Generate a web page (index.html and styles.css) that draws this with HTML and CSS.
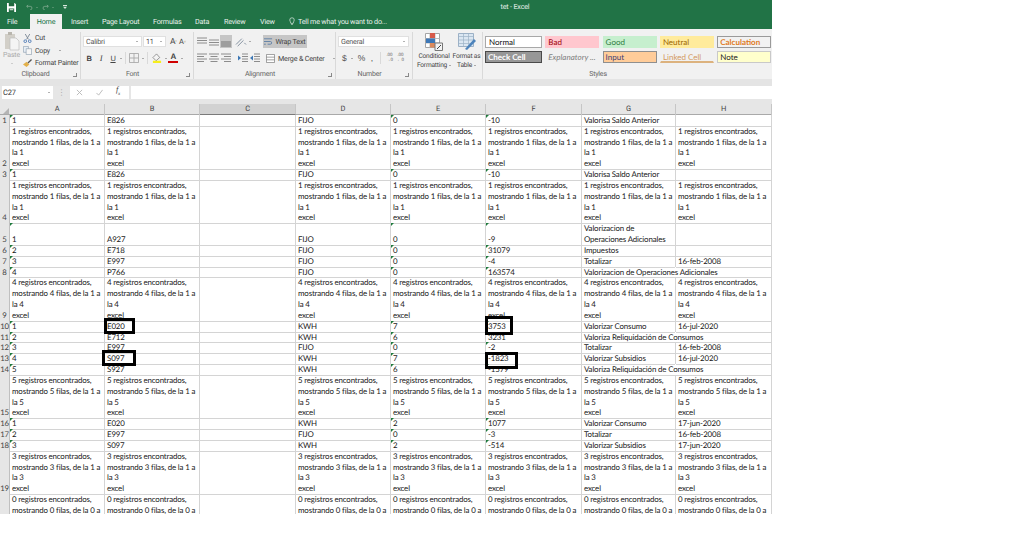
FILE: index.html
```html
<!DOCTYPE html>
<html lang="en">
<head>
<meta charset="utf-8">
<title>tet - Excel</title>
<link rel="stylesheet" href="styles.css">
</head>
<body>
<div class="app">
  <header class="title">
    <div class="qat">
      <svg class="q-save" viewBox="0 0 10 10"><path d="M0 0h8.500L10 1.500V10H0z" fill="#fff"/><path d="M2 0h6v3.500H2zM2 6h6v4H2z" fill="#20693f"/><path d="M3 7h4v1H3z" fill="#fff"/></svg>
      <svg class="q-undo" viewBox="0 0 10 8"><path d="M3 1 1 3l2 2M1 3h5a2.500 2.500 0 0 1 0 5" fill="none" stroke="#7fa98e" stroke-width="1.200"/></svg>
      <span class="q-dot"></span>
      <svg class="q-redo" viewBox="0 0 10 8"><path d="M7 1l2 2-2 2M9 3H4a2.500 2.500 0 0 0 0 5" fill="none" stroke="#7fa98e" stroke-width="1.200"/></svg>
      <span class="q-dot"></span>
      <svg class="q-more" viewBox="0 0 5 6"><path d="M0 0h5v1H0zM0 2l2.500 3L5 2z" fill="#d5e5da"/></svg>
    </div>
    <div class="doc">tet - Excel</div>
  </header>
  <nav class="tabs">
    <span class="tab t-file">File</span>
    <span class="tab t-home">Home</span>
    <span class="tab t-ins">Insert</span>
    <span class="tab t-page">Page Layout</span>
    <span class="tab t-form">Formulas</span>
    <span class="tab t-data">Data</span>
    <span class="tab t-rev">Review</span>
    <span class="tab t-view">View</span>
    <span class="tell">
      <svg class="bulb" viewBox="0 0 8 11"><path d="M2.500 8C2.500 6 1 5.500 1 3.500a3 3 0 0 1 6 0C7 5.500 5.500 6 5.500 8zM3 9.500h2" fill="none" stroke="#fff" stroke-width=".8"/></svg>
      Tell me what you want to do...
    </span>
  </nav>

  <section class="ribbon">
    <div class="grp g-clip">
      <div class="grp-body clip">
        <div class="paste">
          <svg class="paste-ic" viewBox="0 0 16 19"><path d="M1 2h10v15H1z" fill="#d2cfc8"/><path d="M4 0h4v3H4z" fill="#b9b6ae"/><path d="M6 6h6l3 3v9H6z" fill="#f4f4f4" stroke="#bdbdbd" stroke-width=".7"/></svg>
          <span class="paste-t">Paste</span>
          <span class="arrow paste-a"></span>
        </div>
        <div class="clip-list">
          <div class="clip-i"><svg class="i10" viewBox="0 0 10 10"><path d="M2.500 0 6 6M7.500 0 4 6" stroke="#7b8794" fill="none"/><circle cx="2.500" cy="8" r="1.500" fill="none" stroke="#4a78b5"/><circle cx="7.500" cy="8" r="1.500" fill="none" stroke="#4a78b5"/></svg>Cut</div>
          <div class="clip-i"><svg class="i10" viewBox="0 0 10 10"><path d="M.5.500h5.500v6.500H.5z" fill="#e7eef6" stroke="#8b9cad" stroke-width=".7"/><path d="M3.500 3h6v6.500h-6z" fill="#f6f6f6" stroke="#8b9cad" stroke-width=".7"/></svg>Copy<span class="arrow copy-a"></span></div>
          <div class="clip-i"><svg class="i10" viewBox="0 0 10 10"><path d="M0 6l4-3 3 3-3 3z" fill="#e2b04a"/><path d="M5 4l4-4 1 1-4 4z" fill="#555"/></svg>Format Painter</div>
        </div>
      </div>
      <div class="grp-label">Clipboard<span class="launch"></span></div>
    </div>

    <div class="grp g-font">
      <div class="grp-body col">
        <div class="rw">
          <div class="combo c-name"><span>Calibri</span><span class="arrow"></span></div>
          <div class="combo c-size"><span>11</span><span class="arrow"></span></div>
          <span class="grow">A<sup>^</sup></span>
          <span class="grow small">A<sup>˅</sup></span>
        </div>
        <div class="rw r-fmt">
          <b class="f f-b">B</b><i class="f f-i">I</i><span class="f f-u">U</span><span class="arrow u-a"></span>
          <span class="vsep"></span>
          <svg class="i11" viewBox="0 0 11 11"><path d="M.5.500h10v10H.5zM5.500.5v10M.5 5.500h10" fill="none" stroke="#a9a9a9"/></svg><span class="arrow b-a"></span>
          <span class="vsep v2"></span>
          <svg class="i11" viewBox="0 0 11 11"><path d="M5 1 1 5l3.500 3.500L8.500 5z" fill="#f4f4f4" stroke="#666" stroke-width=".7"/><path d="M1 8.500h9V11H1z" fill="#f6ee1c"/></svg><span class="arrow b-a b-f"></span>
          <span class="fcolor">A</span><span class="arrow b-a"></span>
        </div>
      </div>
      <div class="grp-label">Font<span class="launch"></span></div>
    </div>

    <div class="grp g-align">
      <div class="grp-body col">
        <div class="rw">
          <svg class="i12" viewBox="0 0 12 12"><path d="M1 2h10M1 4.500h10M1 7h10" stroke="#8c8c8c"/></svg>
          <svg class="i12" viewBox="0 0 12 12"><path d="M1 4h10M1 6.500h10M1 9h10" stroke="#8c8c8c"/></svg>
          <span class="hl"><svg class="i12" viewBox="0 0 12 12"><path d="M1 6h10M1 8h10M1 10h10" stroke="#777"/></svg></span>
          <svg class="orient" viewBox="0 0 14 12"><path d="M1 9 8 2M3 11l7-7" stroke="#6d7d8f"/><path d="M11 7l2 2" stroke="#6d7d8f"/></svg><span class="arrow o-a"></span>
          <span class="wrap"><svg class="i10" viewBox="0 0 10 10"><path d="M0 2h9M0 5h7a1.500 1.500 0 0 1 0 3H4M0 8h2" fill="none" stroke="#5d7fa5"/></svg>Wrap Text</span>
        </div>
        <div class="rw r-al">
          <svg class="i12" viewBox="0 0 12 12"><path d="M1 2h10M1 4.500h7M1 7h10M1 9.500h7" stroke="#8c8c8c"/></svg>
          <svg class="i12" viewBox="0 0 12 12"><path d="M1 2h10M2.500 4.500h7M1 7h10M2.500 9.500h7" stroke="#8c8c8c"/></svg>
          <svg class="i12" viewBox="0 0 12 12"><path d="M1 2h10M4 4.500h7M1 7h10M4 9.500h7" stroke="#8c8c8c"/></svg>
          <svg class="i12 i-ind" viewBox="0 0 12 12"><path d="M5 2h6M5 4.500h6M5 7h6M5 9.500h6" stroke="#8c8c8c"/><path d="M4 6 1 3.500v5z" fill="#3e78b5"/></svg>
          <svg class="i12" viewBox="0 0 12 12"><path d="M5 2h6M5 4.500h6M5 7h6M5 9.500h6" stroke="#8c8c8c"/><path d="M1 6l3-2.500v5z" fill="#3e78b5"/></svg>
          <span class="merge"><svg class="i10" viewBox="0 0 10 10"><path d="M.5.500h9v9h-9zM.5 3.500h9M.5 6.500h9" fill="#fff" stroke="#7c7c7c" stroke-width=".8"/></svg>Merge &amp; Center<span class="arrow m-a"></span></span>
        </div>
      </div>
      <div class="grp-label">Alignment<span class="launch"></span></div>
    </div>

    <div class="grp g-num">
      <div class="grp-body col">
        <div class="rw"><div class="combo c-num"><span>General</span><span class="arrow"></span></div></div>
        <div class="rw r-num">
          <span class="n n-d">$</span><span class="arrow n-a"></span>
          <span class="n n-p">%</span><span class="n n-c">,</span>
          <span class="vsep n-s"></span>
          <span class="dec">.00<br>→0</span><span class="dec">.00<br>←0</span>
        </div>
      </div>
      <div class="grp-label">Number<span class="launch"></span></div>
    </div>

    <div class="grp g-tbl">
      <div class="grp-body big-row">
        <div class="big">
          <svg class="big-ic" viewBox="0 0 18 18"><path d="M.5.500h14v14H.5z" fill="#fff" stroke="#a5a5a5"/><path d="M.5 5.500h14M.5 10h14M5 .5v14M10 .5v14" stroke="#bbb"/><path d="M5 0h5v5H5z" fill="#d75a4a"/><path d="M1 5.500h4V10H1zM5 5.500h5V10H5z" fill="#3d78b8"/><path d="M5 10h5v4.500H5z" fill="#dc8a5c"/><path d="M10 10h7.500v7.500H10z" fill="#f3f3f3" stroke="#777"/><path d="M12 16l4-4" stroke="#444"/></svg>
          <span>Conditional<br>Formatting<span class="arrow in"></span></span>
        </div>
        <div class="big">
          <svg class="big-ic" viewBox="0 0 18 18"><path d="M.5.500h15v13H.5z" fill="#dbe7f2" stroke="#9cb1c6"/><path d="M.5 3.500h15M.5 7h15M.5 10.500h15M5.500.5v13M10.500.5v13" stroke="#9cb1c6" stroke-width=".7"/><path d="M7 16l9-10 2 2-9 9z" fill="#4d83bb"/></svg>
          <span>Format as<br>Table<span class="arrow in"></span></span>
        </div>
      </div>
      <div class="grp-label">&nbsp;</div>
    </div>

    <div class="grp g-sty">
      <div class="grp-body sty">
        <span class="s s-norm">Normal</span>
        <span class="s s-bad">Bad</span>
        <span class="s s-good">Good</span>
        <span class="s s-neu">Neutral</span>
        <span class="s s-calc">Calculation</span>
        <span class="s s-chk">Check Cell</span>
        <span class="s s-exp">Explanatory ...</span>
        <span class="s s-inp">Input</span>
        <span class="s s-lnk">Linked Cell</span>
        <span class="s s-note">Note</span>
      </div>
      <div class="grp-label sty-label">Styles</div>
    </div>
  </section>

  <div class="band"></div>

  <div class="fbar">
    <div class="namebox"><span>C27</span><span class="arrow"></span></div>
    <span class="dots">⋮</span>
    <div class="fbtns">
      <svg class="fb" viewBox="0 0 8 8"><path d="M1 1l6 6M7 1 1 7" stroke="#b5b5b5"/></svg>
      <svg class="fb" viewBox="0 0 8 8"><path d="M.5 4.500 3 7l4.500-6" fill="none" stroke="#b5b5b5"/></svg>
      <i class="fx">f<sub>x</sub></i>
    </div>
    <div class="finput"></div>
  </div>

  <div class="sheet">
    <div class="rowg heads">
      <div class="corner"><span></span></div>
      <div class="ch">A</div><div class="ch">B</div><div class="ch sel">C</div><div class="ch">D</div><div class="ch">E</div><div class="ch">F</div><div class="ch">G</div><div class="ch">H</div>
    </div>

    <div class="rowg l1"><div class="rh">1</div><div class="c g">1</div><div class="c">E826</div><div class="c"></div><div class="c">FIJO</div><div class="c g">0</div><div class="c g">-10</div><div class="c">Valorisa Saldo Anterior</div><div class="c"></div></div>

    <div class="rowg l4"><div class="rh">2</div><div class="c">1 registros encontrados,<br>mostrando 1 filas, de la 1 a<br>la 1<br>excel</div><div class="c">1 registros encontrados,<br>mostrando 1 filas, de la 1 a<br>la 1<br>excel</div><div class="c"></div><div class="c">1 registros encontrados,<br>mostrando 1 filas, de la 1 a<br>la 1<br>excel</div><div class="c">1 registros encontrados,<br>mostrando 1 filas, de la 1 a<br>la 1<br>excel</div><div class="c">1 registros encontrados,<br>mostrando 1 filas, de la 1 a<br>la 1<br>excel</div><div class="c">1 registros encontrados,<br>mostrando 1 filas, de la 1 a<br>la 1<br>excel</div><div class="c">1 registros encontrados,<br>mostrando 1 filas, de la 1 a<br>la 1<br>excel</div></div>

    <div class="rowg l1"><div class="rh">3</div><div class="c g">1</div><div class="c">E826</div><div class="c"></div><div class="c">FIJO</div><div class="c g">0</div><div class="c g">-10</div><div class="c">Valorisa Saldo Anterior</div><div class="c"></div></div>

    <div class="rowg l4"><div class="rh">4</div><div class="c">1 registros encontrados,<br>mostrando 1 filas, de la 1 a<br>la 1<br>excel</div><div class="c">1 registros encontrados,<br>mostrando 1 filas, de la 1 a<br>la 1<br>excel</div><div class="c"></div><div class="c">1 registros encontrados,<br>mostrando 1 filas, de la 1 a<br>la 1<br>excel</div><div class="c">1 registros encontrados,<br>mostrando 1 filas, de la 1 a<br>la 1<br>excel</div><div class="c">1 registros encontrados,<br>mostrando 1 filas, de la 1 a<br>la 1<br>excel</div><div class="c">1 registros encontrados,<br>mostrando 1 filas, de la 1 a<br>la 1<br>excel</div><div class="c">1 registros encontrados,<br>mostrando 1 filas, de la 1 a<br>la 1<br>excel</div></div>

    <div class="rowg l2"><div class="rh">5</div><div class="c g">1</div><div class="c">A927</div><div class="c"></div><div class="c">FIJO</div><div class="c g">0</div><div class="c g">-9</div><div class="c">Valorizacion de<br>Operaciones Adicionales</div><div class="c"></div></div>
    <div class="rowg l1"><div class="rh">6</div><div class="c g">2</div><div class="c">E718</div><div class="c"></div><div class="c">FIJO</div><div class="c g">0</div><div class="c g">31079</div><div class="c">Impuestos</div><div class="c"></div></div>
    <div class="rowg l1"><div class="rh">7</div><div class="c g">3</div><div class="c">E997</div><div class="c"></div><div class="c">FIJO</div><div class="c g">0</div><div class="c g">-4</div><div class="c">Totalizar</div><div class="c">16-feb-2008</div></div>
    <div class="rowg l1"><div class="rh">8</div><div class="c g">4</div><div class="c">P766</div><div class="c"></div><div class="c">FIJO</div><div class="c g">0</div><div class="c g">163574</div><div class="c over">Valorizacion de Operaciones Adicionales</div><div class="c"></div></div>

    <div class="rowg l4"><div class="rh">9</div><div class="c">4 registros encontrados,<br>mostrando 4 filas, de la 1 a<br>la 4<br>excel</div><div class="c">4 registros encontrados,<br>mostrando 4 filas, de la 1 a<br>la 4<br>excel</div><div class="c"></div><div class="c">4 registros encontrados,<br>mostrando 4 filas, de la 1 a<br>la 4<br>excel</div><div class="c">4 registros encontrados,<br>mostrando 4 filas, de la 1 a<br>la 4<br>excel</div><div class="c">4 registros encontrados,<br>mostrando 4 filas, de la 1 a<br>la 4<br>excel</div><div class="c">4 registros encontrados,<br>mostrando 4 filas, de la 1 a<br>la 4<br>excel</div><div class="c">4 registros encontrados,<br>mostrando 4 filas, de la 1 a<br>la 4<br>excel</div></div>

    <div class="rowg l1"><div class="rh">10</div><div class="c g">1</div><div class="c">E020</div><div class="c"></div><div class="c">KWH</div><div class="c g">7</div><div class="c g">3753</div><div class="c">Valorizar Consumo</div><div class="c">16-jul-2020</div></div>
    <div class="rowg l1"><div class="rh">11</div><div class="c g">2</div><div class="c">E712</div><div class="c"></div><div class="c">KWH</div><div class="c g">6</div><div class="c g">3231</div><div class="c over">Valoriza Reliquidación de Consumos</div><div class="c"></div></div>
    <div class="rowg l1"><div class="rh">12</div><div class="c g">3</div><div class="c">E997</div><div class="c"></div><div class="c">FIJO</div><div class="c g">0</div><div class="c g">-2</div><div class="c">Totalizar</div><div class="c">16-feb-2008</div></div>
    <div class="rowg l1"><div class="rh">13</div><div class="c g">4</div><div class="c">S097</div><div class="c"></div><div class="c">KWH</div><div class="c g">7</div><div class="c g">-1823</div><div class="c">Valorizar Subsidios</div><div class="c">16-jul-2020</div></div>
    <div class="rowg l1"><div class="rh">14</div><div class="c g">5</div><div class="c">S927</div><div class="c"></div><div class="c">KWH</div><div class="c g">6</div><div class="c g">-1579</div><div class="c over">Valoriza Reliquidación de Consumos</div><div class="c"></div></div>

    <div class="rowg l4"><div class="rh">15</div><div class="c">5 registros encontrados,<br>mostrando 5 filas, de la 1 a<br>la 5<br>excel</div><div class="c">5 registros encontrados,<br>mostrando 5 filas, de la 1 a<br>la 5<br>excel</div><div class="c"></div><div class="c">5 registros encontrados,<br>mostrando 5 filas, de la 1 a<br>la 5<br>excel</div><div class="c">5 registros encontrados,<br>mostrando 5 filas, de la 1 a<br>la 5<br>excel</div><div class="c">5 registros encontrados,<br>mostrando 5 filas, de la 1 a<br>la 5<br>excel</div><div class="c">5 registros encontrados,<br>mostrando 5 filas, de la 1 a<br>la 5<br>excel</div><div class="c">5 registros encontrados,<br>mostrando 5 filas, de la 1 a<br>la 5<br>excel</div></div>

    <div class="rowg l1"><div class="rh">16</div><div class="c g">1</div><div class="c">E020</div><div class="c"></div><div class="c">KWH</div><div class="c g">2</div><div class="c g">1077</div><div class="c">Valorizar Consumo</div><div class="c">17-jun-2020</div></div>
    <div class="rowg l1"><div class="rh">17</div><div class="c g">2</div><div class="c">E997</div><div class="c"></div><div class="c">FIJO</div><div class="c g">0</div><div class="c g">-3</div><div class="c">Totalizar</div><div class="c">16-feb-2008</div></div>
    <div class="rowg l1"><div class="rh">18</div><div class="c g">3</div><div class="c">S097</div><div class="c"></div><div class="c">KWH</div><div class="c g">2</div><div class="c g">-514</div><div class="c">Valorizar Subsidios</div><div class="c">17-jun-2020</div></div>

    <div class="rowg l4"><div class="rh">19</div><div class="c">3 registros encontrados,<br>mostrando 3 filas, de la 1 a<br>la 3<br>excel</div><div class="c">3 registros encontrados,<br>mostrando 3 filas, de la 1 a<br>la 3<br>excel</div><div class="c"></div><div class="c">3 registros encontrados,<br>mostrando 3 filas, de la 1 a<br>la 3<br>excel</div><div class="c">3 registros encontrados,<br>mostrando 3 filas, de la 1 a<br>la 3<br>excel</div><div class="c">3 registros encontrados,<br>mostrando 3 filas, de la 1 a<br>la 3<br>excel</div><div class="c">3 registros encontrados,<br>mostrando 3 filas, de la 1 a<br>la 3<br>excel</div><div class="c">3 registros encontrados,<br>mostrando 3 filas, de la 1 a<br>la 3<br>excel</div></div>

    <div class="rowg l4"><div class="rh">20</div><div class="c">0 registros encontrados,<br>mostrando 0 filas, de la 0 a<br>la 0<br>excel</div><div class="c">0 registros encontrados,<br>mostrando 0 filas, de la 0 a<br>la 0<br>excel</div><div class="c"></div><div class="c">0 registros encontrados,<br>mostrando 0 filas, de la 0 a<br>la 0<br>excel</div><div class="c">0 registros encontrados,<br>mostrando 0 filas, de la 0 a<br>la 0<br>excel</div><div class="c">0 registros encontrados,<br>mostrando 0 filas, de la 0 a<br>la 0<br>excel</div><div class="c">0 registros encontrados,<br>mostrando 0 filas, de la 0 a<br>la 0<br>excel</div><div class="c">0 registros encontrados,<br>mostrando 0 filas, de la 0 a<br>la 0<br>excel</div></div>

    <span class="mark m1"></span>
    <span class="mark m2"></span>
    <span class="mark m3"></span>
    <span class="mark m4"></span>
  </div>
</div>
</body>
</html>
```

FILE: styles.css
```css
* { box-sizing: border-box; }
html, body { margin: 0; padding: 0; background: #fff; }
body { width: 1024px; height: 534px; overflow: hidden; text-rendering: geometricPrecision; }
.app {
  width: 772px; height: 514px; overflow: hidden;
  display: flex; flex-direction: column;
  font-family: Roboto, "Liberation Sans", sans-serif;
  font-size: 7.200px; letter-spacing: -.2px; color: #444; background: #e6e6e6;
}

/* title bar */
.title { height: 14px; flex: none; background: #217346; color: #e6f0ea; position: relative; display: flex; align-items: center; }
.qat { display: flex; align-items: center; padding-left: 7px; }
.q-save { width: 9px; height: 9px; margin-right: 10px; }
.q-undo, .q-redo { width: 7px; height: 6px; }
.q-dot { width: 0; height: 0; margin: 0 4px 0 3px; border: 1.500px solid transparent; border-top-color: #7fa98e; border-bottom: 0; }
.q-more { width: 4px; height: 5px; margin-left: 5px; }
.doc { position: absolute; left: 0; width: 1030px; top: 2px; text-align: center; line-height: 10px; }

/* tabs */
.tabs { height: 15px; flex: none; background: #217346; display: flex; align-items: stretch; color: #eaf2ed; line-height: 15px; }
.tab { display: block; }
.t-file { margin-left: 7px; width: 23px; }
.t-home { width: 32px; background: #f1f1f1; color: #217346; text-align: center; }
.t-ins { margin-left: 9px; width: 31px; }
.t-page { width: 51px; }
.t-form { width: 42px; }
.t-data { width: 29px; }
.t-rev { width: 36px; }
.t-view { width: 29px; }
.tell { display: flex; align-items: center; gap: 3px; }
.bulb { width: 6px; height: 9px; }

/* ribbon */
.ribbon { height: 50px; flex: none; background: #f1f1f1; display: flex; padding-top: 3px; }
.grp { display: flex; flex-direction: column; border-right: 1px solid #d9d9d9; flex: none; height: 47px; }
.g-sty { border-right: 0; flex: 1; }
.grp-body { height: 38px; flex: none; }
.grp-label { height: 9px; line-height: 9px; padding-right: 9px; text-align: center; font-size: 7px; color: #666; position: relative; }
.sty-label { padding-right: 59px; }
.launch { position: absolute; right: 3px; top: 3px; width: 4px; height: 4px; border-right: 1px solid #888; border-bottom: 1px solid #888; }
.g-clip { width: 81px; }
.g-font { width: 113px; }
.g-align { width: 142px; }
.g-num { width: 77px; }
.g-tbl { width: 70px; }
.col { display: flex; flex-direction: column; }
.rw { display: flex; align-items: center; height: 15px; margin-top: 2px; }
.rw > * { flex: none; }
.r-fmt { margin-top: 1.500px; padding-left: 2px; }
.arrow { display: inline-block; width: 0; height: 0; border: 1.800px solid transparent; border-top-color: #666; border-bottom: 0; flex: none; }
.arrow.in { margin-left: 2px; vertical-align: middle; }

.clip { display: flex; padding-left: 3px; }
.paste { width: 17px; display: flex; flex-direction: column; align-items: center; color: #aaa; }
.paste-ic { width: 16px; height: 19px; flex: none; }
.paste-t { font-size: 7px; line-height: 9px; margin-top: 0; }
.paste-a { margin-top: 3px; border-top-color: #aaa; }
.clip-list { margin-left: 3px; margin-top: 0; display: flex; flex-direction: column; }
.clip-i { height: 12.500px; display: flex; align-items: center; gap: 3px; white-space: nowrap; font-size: 7px; color: #444; }
.copy-a { margin-left: 6px; }
.i10 { width: 9px; height: 9px; flex: none; }
.i11 { width: 10px; height: 10px; flex: none; }
.i12 { width: 12px; height: 12px; flex: none; }

.combo { height: 11px; background: #fff; border: 1px solid #e0e0e0; display: flex; align-items: center; justify-content: space-between; padding: 0 3px 0 2px; color: #555; }
.g-font .rw:first-child { padding-left: 2px; }
.c-name { width: 59px; }
.c-size { width: 23px; margin-left: 1px; }
.grow { font-size: 8.500px; margin-left: 4px; width: 8px; color: #444; line-height: 10px; white-space: nowrap; }
.grow.small { font-size: 7.500px; margin-left: 1px; }
.grow sup { font-size: 4px; color: #b08a3a; vertical-align: top; }
.f { font-family: "Liberation Serif", serif; font-size: 8.500px; width: 12px; text-align: center; color: #444; }
.f-b { font-family: "Liberation Sans", sans-serif; font-size: 7.500px; }
.f-u { text-decoration: underline; font-family: "Liberation Sans", sans-serif; font-size: 7.500px; }
.u-a { margin-left: 1px; }
.vsep { width: 1px; height: 12px; background: #d9d9d9; margin: 0 3px 0 3.400px; }
.v2 { margin: 0 3.400px 0 0; }
.b-a { margin: 0 3px; }
.b-f { margin-right: 1.400px; }
.fcolor { width: 10px; text-align: center; font-family: "Liberation Sans", sans-serif; font-weight: bold; font-size: 8px; line-height: 8px; color: #444; border-bottom: 2px solid #d00000; }

.g-align .rw { padding-left: 2px; }
.hl { width: 12px; height: 13px; background: #c6c6c6; display: flex; align-items: center; }
.orient { width: 12px; height: 10px; margin-left: 3px; }
.o-a { margin-left: 2px; }
.wrap { width: 44px; height: 13px; margin-left: 12.400px; background: #c6c6c6; display: flex; align-items: center; gap: 2px; padding-left: 1px; white-space: nowrap; }
.r-al { margin-top: 1.500px; }
.i-ind { margin-left: 5px; }
.merge { margin-left: 5px; display: flex; align-items: center; gap: 3px; white-space: nowrap; }
.m-a { margin-left: 5px; }

.c-num { width: 71px; margin-left: 2px; }
.g-num .r-num { margin-top: 1.500px; padding-left: 6px; }
.n { font-family: "Liberation Sans", sans-serif; color: #555; text-align: center; font-size: 8.500px; }
.n-a { margin: 0 3.400px 0 4px; }
.n-p { width: 11px; }
.n-c { width: 4px; margin-left: 3px; }
.n-s { margin: 0 3px 0 6px; }
.dec { font-size: 4.500px; line-height: 5px; width: 11px; color: #666; text-align: center; }

.big-row { display: flex; padding-left: 4px; }
.big { width: 34px; display: flex; flex-direction: column; align-items: center; text-align: center; font-size: 6.600px; line-height: 9px; white-space: nowrap; color: #444; }
.big + .big { margin-left: 0; }
.big-ic { width: 18px; height: 18px; flex: none; margin: 1px 0 1px; }

.sty { display: grid; grid-template-columns: 57px repeat(4, 54px); column-gap: 3.300px; row-gap: 3px; padding: 4px 0 0 2px; grid-auto-rows: 12px; letter-spacing: 0; }
.s { font-family: Lato, sans-serif; font-size: 8px; line-height: 10px; padding-left: 2px; border: 1px solid transparent; white-space: nowrap; overflow: hidden; }
.s-norm { background: #fff; border-color: #a8a8a8; color: #111; padding-left: 3px; }
.s-bad { background: #ffc7ce; color: #9c0006; }
.s-good { background: #c6efce; color: #2f7d3f; }
.s-neu { background: #ffeb9c; color: #9c6500; }
.s-calc { background: #f2f2f2; color: #e07a1c; border-color: #9a9a9a; font-weight: bold; }
.s-chk { background: #979797; color: #fff; border-color: #4a4a4a; font-weight: bold; }
.s-exp { color: #7f7f7f; font-style: italic; }
.s-inp { background: #ffcc99; color: #3f3f76; border-color: #8f8f8f; }
.s-lnk { color: #d39a62; border-bottom: 2px solid #dcb27e; }
.s-note { background: #ffffcc; color: #222; border-color: #c9c9c9; }

.band { height: 7px; flex: none; background: #e4e4e4; }

/* formula bar */
.fbar { height: 18px; flex: none; background: #e6e6e6; display: flex; padding-bottom: 5px; }
.namebox { width: 51px; margin-left: 2px; background: #fff; display: flex; align-items: center; justify-content: space-between; padding: 0 3px 0 1px; font-size: 7.500px; color: #333; }
.dots { width: 17px; text-align: center; color: #aaa; font-size: 8px; line-height: 13px; }
.fbtns { width: 59px; background: #fff; display: flex; align-items: center; padding-left: 6px; gap: 13px; }
.fb { width: 7px; height: 7px; }
.fx { font-family: "Liberation Serif", serif; font-size: 8px; line-height: 8px; color: #444; }
.fx sub { font-size: 5px; }
.finput { flex: 1; background: #fff; margin-left: 2px; }

/* sheet */
.sheet { flex: 1; background: #fff; position: relative; overflow: hidden; font-family: Lato, sans-serif; font-size: 7.900px; letter-spacing: -.15px; line-height: 10.830px; color: #1a1a1a; }
.rowg { display: grid; grid-template-columns: 10px 95px 95px 96px 95px 95px 96px 94px 96px; flex: none; }
.heads { height: 11px; background: #e6e6e6; border-bottom: 1px solid #a9a9a9; }
.corner { position: relative; }
.corner span { position: absolute; right: 1px; bottom: 1px; width: 0; height: 0; border-left: 6px solid transparent; border-bottom: 6px solid #b4b4b4; }
.ch { text-align: center; font-family: Roboto, sans-serif; font-size: 7.500px; line-height: 10px; border-right: 1px solid #c6c6c6; color: #444; }
.sel { background: #d2d2d2; border-bottom: 1px solid #7a7a7a; height: 11px; }
.l1 { height: 10.830px; }
.l2 { height: 21.660px; }
.l4 { height: 43.330px; }
.rh { background: #e6e6e6; font-size: 7.800px; color: #444; display: flex; align-items: flex-end; justify-content: center; border-bottom: 1px solid #cfcfcf; border-right: 1px solid #c0c0c0; white-space: nowrap; letter-spacing: -.2px; }
.c { border-right: 1px solid #d4d4d4; border-bottom: 1px solid #d4d4d4; padding-left: 2px; white-space: nowrap; position: relative; display: flex; flex-direction: column; justify-content: flex-end; }
.over { border-right-color: #fff; }
.g::before { content: ""; position: absolute; left: 0; top: 0; width: 0; height: 0; border-top: 3.500px solid #1e7a3c; border-right: 3.500px solid transparent; }

.mark { position: absolute; border: 3px solid #000; pointer-events: none; }
.m1 { left: 104px; top: 214px; width: 31px; height: 16px; }
.m2 { left: 102px; top: 246px; width: 34px; height: 16px; }
.m3 { left: 485px; top: 212px; width: 28px; height: 19px; }
.m4 { left: 485px; top: 248px; width: 33px; height: 17px; }
```
